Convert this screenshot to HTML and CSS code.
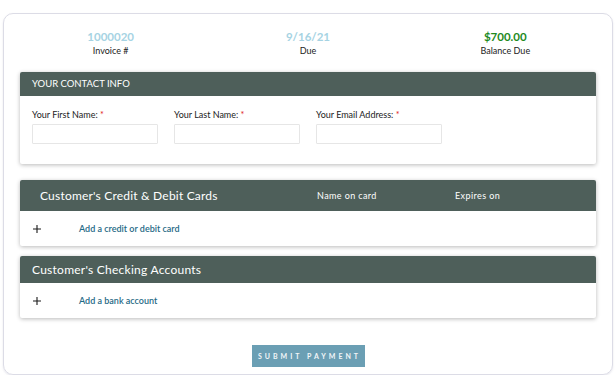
FILE: index.html
```html
<!DOCTYPE html>
<html>
<head>
<meta charset="utf-8">
<link rel="stylesheet" href="styles.css">
</head>
<body>
<div class="card">
  <div class="summary">
    <div class="stat">
      <div class="stat-value blue">1000020</div>
      <div class="stat-label">Invoice #</div>
    </div>
    <div class="stat">
      <div class="stat-value blue">9/16/21</div>
      <div class="stat-label">Due</div>
    </div>
    <div class="stat">
      <div class="stat-value green">$700.00</div>
      <div class="stat-label">Balance Due</div>
    </div>
  </div>

  <div class="panel contact">
    <div class="panel-head small">YOUR CONTACT INFO</div>
    <div class="contact-body">
      <div class="field">
        <label class="field-label">Your First Name: <span class="req">*</span></label>
        <input class="field-input" type="text">
      </div>
      <div class="field">
        <label class="field-label">Your Last Name: <span class="req">*</span></label>
        <input class="field-input" type="text">
      </div>
      <div class="field">
        <label class="field-label">Your Email Address: <span class="req">*</span></label>
        <input class="field-input" type="text">
      </div>
    </div>
  </div>

  <div class="panel cards">
    <div class="panel-head cards-head">
      <span class="cards-title">Customer's Credit &amp; Debit Cards</span>
      <span class="col-label">Name on card</span>
      <span class="col-label">Expires on</span>
    </div>
    <div class="add-row">
      <span class="plus"><svg width="8" height="8" viewBox="0 0 8 8"><path d="M4 0V8M0 4H8" stroke="#1a1a1a" stroke-width="1.1" fill="none"/></svg></span>
      <a class="add-link" href="#">Add a credit or debit card</a>
    </div>
  </div>

  <div class="panel bank">
    <div class="panel-head bank-head">Customer's Checking Accounts</div>
    <div class="add-row">
      <span class="plus"><svg width="8" height="8" viewBox="0 0 8 8"><path d="M4 0V8M0 4H8" stroke="#1a1a1a" stroke-width="1.1" fill="none"/></svg></span>
      <a class="add-link" href="#">Add a bank account</a>
    </div>
  </div>

  <div class="actions">
    <button class="submit" type="button">SUBMIT PAYMENT</button>
  </div>
</div>
</body>
</html>
```

FILE: styles.css
```css
* { box-sizing: border-box; }
html, body { margin: 0; padding: 0; background: #ffffff; }
body {
  font-family: "Lato", "Liberation Sans", sans-serif;
  color: #1e1e1e;
}
.card {
  margin: 13px 3px 0 3px;
  width: 610px;
  height: 362px;
  border: 1px solid #dcdce6;
  border-radius: 10px;
  box-shadow: 0 1px 2px rgba(150,150,180,0.25);
  padding: 0 8px;
}
.summary {
  display: grid;
  grid-template-columns: 1fr 1fr 1fr;
  padding-top: 16px;
  height: 58px;
}
.stat { text-align: center; }
.stat-value {
  font-size: 11.5px;
  font-weight: 700;
  line-height: 14px;
}
.blue { color: #a6d3e3; }
.green { color: #1e8a1e; }
.stat-label {
  font-size: 9px;
  line-height: 12px;
  margin-top: 1px;
  color: #222;
}
.panel {
  margin: 0 8px;
  background: #fff;
  border-radius: 2px;
  box-shadow: 0 1px 4px rgba(0,0,0,0.28);
}
.panel-head {
  background: #4e5f5a;
  color: #fff;
  border-radius: 2px 2px 0 0;
}
.panel-head.small {
  height: 24px;
  line-height: 24px;
  padding-left: 12px;
  font-size: 9.5px;
  letter-spacing: 0;
}
.contact-body {
  display: flex;
  gap: 16px;
  padding: 13px 12px 20px 12px;
}
.field { display: flex; flex-direction: column; }
.field-label {
  font-size: 9px;
  line-height: 11px;
  height: 15px;
  color: #222;
}
.req { color: #e02020; }
.field-input {
  width: 126px;
  height: 20px;
  border: 1px solid #e6e6e6;
  border-radius: 1px;
  margin: 0;
  padding: 0;
  background: #fff;
}
.cards { margin-top: 16px; }
.cards-head {
  height: 31px;
  display: grid;
  grid-template-columns: 277px 138px 1fr;
  align-items: center;
  padding-left: 20px;
}
.cards-title {
  font-size: 12px;
  letter-spacing: 0.2px;
}
.col-label {
  font-size: 9px;
  letter-spacing: 0.4px;
}
.bank { margin-top: 10px; }
.bank-head {
  height: 27px;
  line-height: 27px;
  padding-left: 12px;
  font-size: 12px;
  letter-spacing: 0.25px;
}
.add-row {
  height: 35px;
  display: flex;
  align-items: center;
  padding-left: 13px;
}
.plus {
  width: 46px;
  display: flex;
  align-items: center;
}
.add-link {
  font-size: 9px;
  font-weight: 600;
  color: #1f6a86;
  text-decoration: none;
}
.actions {
  display: flex;
  justify-content: center;
  margin-top: 27px;
}
.submit {
  width: 113px;
  height: 22px;
  background: #6b9fb4;
  border: none;
  border-radius: 0;
  color: #f2f6f8;
  font-family: "Lato", "Liberation Sans", sans-serif;
  font-size: 7px;
  font-weight: 700;
  letter-spacing: 3px;
  padding: 0 0 0 3px;
}
```
